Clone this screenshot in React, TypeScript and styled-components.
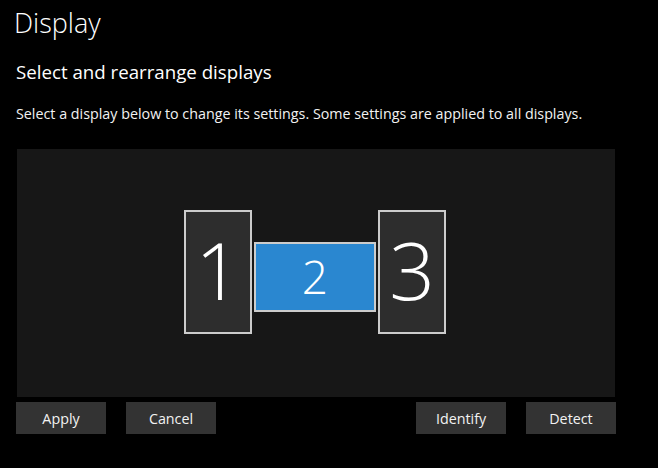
import React from "react";
import styled, { createGlobalStyle } from "styled-components";

const GlobalStyle = createGlobalStyle`
  html, body {
    margin: 0;
    padding: 0;
    background: #000;
  }
  body {
    font-family: "Open Sans", "Noto Sans", sans-serif;
    color: #fff;
  }
`;

type Monitor = {
  id: number;
  left: number;
  top: number;
  width: number;
  height: number;
  selected?: boolean;
};

const monitors: Monitor[] = [
  { id: 1, left: 167, top: 61, width: 68, height: 124 },
  { id: 2, left: 237, top: 93, width: 122, height: 70, selected: true },
  { id: 3, left: 361, top: 61, width: 68, height: 124 },
];

const App: React.FC = () => {
  return (
    <>
      <GlobalStyle />
      <Page>
        <Title>Display</Title>
        <Heading>Select and rearrange displays</Heading>
        <Description>
          Select a display below to change its settings. Some settings are applied to all displays.
        </Description>

        <Arrangement>
          {monitors.map((m) => (
            <MonitorBox
              key={m.id}
              $selected={!!m.selected}
              style={{ left: m.left, top: m.top, width: m.width, height: m.height }}
            >
              <MonitorNumber $small={!!m.selected}>{m.id}</MonitorNumber>
            </MonitorBox>
          ))}
        </Arrangement>

        <ButtonRow>
          <ButtonGroup>
            <Button>Apply</Button>
            <Button>Cancel</Button>
          </ButtonGroup>
          <ButtonGroup>
            <Button>Identify</Button>
            <Button>Detect</Button>
          </ButtonGroup>
        </ButtonRow>
      </Page>
    </>
  );
};

export default App;

/* ---------------- Styled Components ---------------- */

const Page = styled.div`
  width: 658px;
  height: 468px;
  padding: 0 0 0 16px;
  box-sizing: border-box;
  display: flex;
  flex-direction: column;
`;

const Title = styled.h1`
  margin: 4px 0 0 -2px;
  font-size: 27px;
  font-weight: 300;
  line-height: 38px;
  color: #fff;
`;

const Heading = styled.h2`
  margin: 17px 0 0 0;
  font-size: 18.7px;
  font-weight: 400;
  line-height: 26px;
  color: #fff;
`;

const Description = styled.p`
  margin: 19px 0 0 0;
  font-size: 14.3px;
  font-weight: 400;
  line-height: 20px;
  color: #f2f2f2;
  white-space: nowrap;
`;

const Arrangement = styled.div`
  position: relative;
  margin: 25px 0 0 1px;
  width: 598px;
  height: 248px;
  background: #171717;
`;

const MonitorBox = styled.div<{ $selected: boolean }>`
  position: absolute;
  box-sizing: border-box;
  border: 2px solid #cccccc;
  background: ${(p) => (p.$selected ? "#2a87d0" : "#2d2d2d")};
  display: flex;
  align-items: center;
  justify-content: center;
`;

const MonitorNumber = styled.span<{ $small: boolean }>`
  font-family: "Open Sans", "Noto Sans", sans-serif;
  font-weight: 300;
  font-size: ${(p) => (p.$small ? "46px" : "80px")};
  line-height: 1;
  color: #fff;
  margin-top: ${(p) => (p.$small ? "-2px" : "-6px")};
`;

const ButtonRow = styled.div`
  margin-top: 5px;
  width: 600px;
  display: flex;
  justify-content: space-between;
`;

const ButtonGroup = styled.div`
  display: flex;
  gap: 20px;
`;

const Button = styled.button`
  width: 90px;
  height: 32px;
  border: none;
  background: #333333;
  color: #f2f2f2;
  font-family: "Open Sans", "Noto Sans", sans-serif;
  font-size: 14.3px;
  padding: 0;
  cursor: pointer;
`;
